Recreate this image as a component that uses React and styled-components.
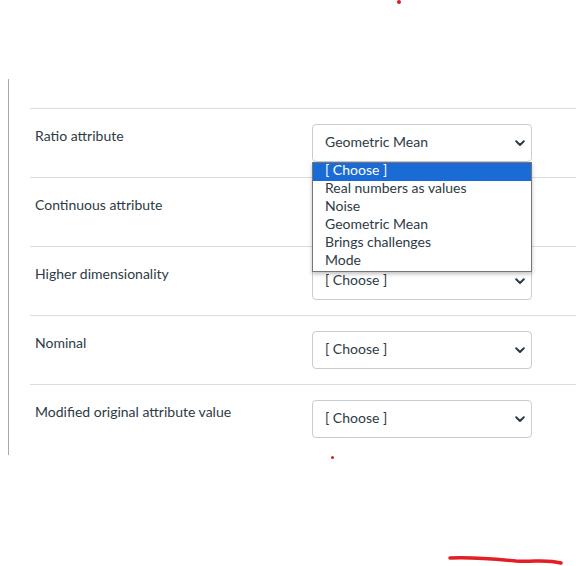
import React from "react";
import styled, { createGlobalStyle } from "styled-components";

const Global = createGlobalStyle`
  html, body { margin: 0; padding: 0; background: #fff; }
  body { font-family: Lato, "Open Sans", sans-serif; color: #2d3b45; }
`;

const Page = styled.div`
  position: relative;
  width: 576px;
  height: 566px;
  overflow: hidden;
  padding-top: 79px;
  box-sizing: border-box;
`;

const Panel = styled.div`
  margin-left: 8px;
  height: 376px;
  border-left: 1px solid #a8a8a8;
  padding: 29px 0 0 21px;
  box-sizing: border-box;
`;

const Row = styled.div`
  display: grid;
  grid-template-columns: 282px 220px;
  height: 69px;
  box-sizing: border-box;
  border-top: 1px solid #dcdcdc;
`;

const Label = styled.div`
  padding: 17px 0 0 5px;
  font-size: 14px;
  line-height: 20px;
`;

const SelectWrap = styled.div`
  position: relative;
  padding-top: 15px;
`;

const Select = styled.div`
  height: 38px;
  box-sizing: border-box;
  border: 1px solid #c7cdd1;
  border-radius: 4px;
  display: flex;
  align-items: center;
  justify-content: space-between;
  padding: 0 6px 0 12px;
  font-size: 14px;
`;

const Value = styled.span`
  margin-bottom: 3px;
`;

const List = styled.ul`
  position: absolute;
  top: 53px;
  left: 0;
  width: 220px;
  margin: 0;
  padding: 0;
  list-style: none;
  box-sizing: border-box;
  border: 1px solid #767676;
  background: #fff;
  box-shadow: 0 2px 4px rgba(0, 0, 0, 0.25);
  z-index: 2;
`;

const Option = styled.li`
  height: 18px;
  line-height: 13px;
  padding-left: 12px;
  font-size: 14px;
  color: ${(p) => (p.$active ? "#fff" : "#2d3b45")};
  background: ${(p) => (p.$active ? "#1a6bd6" : "transparent")};
`;

const Dot = styled.span`
  position: absolute;
  width: ${(p) => p.$size}px;
  height: ${(p) => p.$size}px;
  border-radius: 50%;
  background: #e01b1b;
`;

const Scribble = styled.svg`
  position: absolute;
  left: 446px;
  top: 553px;
`;

const Chevron = () => (
  <svg width="10" height="7" viewBox="0 0 10 7">
    <path d="M1.2 1.3 L5 5 L8.8 1.3" fill="none" stroke="#2d3b45" strokeWidth="2" strokeLinecap="round" strokeLinejoin="round" />
  </svg>
);

const rows = [
  { label: "Ratio attribute", value: "Geometric Mean", open: true },
  { label: "Continuous attribute", value: "[ Choose ]" },
  { label: "Higher dimensionality", value: "[ Choose ]" },
  { label: "Nominal", value: "[ Choose ]" },
  { label: "Modified original attribute value", value: "[ Choose ]" },
];

const options = [
  "[ Choose ]",
  "Real numbers as values",
  "Noise",
  "Geometric Mean",
  "Brings challenges",
  "Mode",
];

export default function App() {
  return (
    <Page>
      <Global />
      <Panel>
        {rows.map((r) => (
          <Row key={r.label}>
            <Label>{r.label}</Label>
            <SelectWrap>
              <Select>
                <Value>{r.value}</Value>
                <Chevron />
              </Select>
              {r.open && (
                <List>
                  {options.map((o, i) => (
                    <Option key={o} $active={i === 0}>{o}</Option>
                  ))}
                </List>
              )}
            </SelectWrap>
          </Row>
        ))}
      </Panel>
      <Dot $size={4} style={{ left: 397, top: 0 }} />
      <Dot $size={3} style={{ left: 331, top: 456 }} />
      <Scribble width="120" height="14" viewBox="0 0 120 14">
        <path d="M4 5 C30 4, 50 6, 70 8 C90 9, 100 6, 115 10" fill="none" stroke="#e31e24" strokeWidth="3.5" strokeLinecap="round" />
      </Scribble>
    </Page>
  );
}
